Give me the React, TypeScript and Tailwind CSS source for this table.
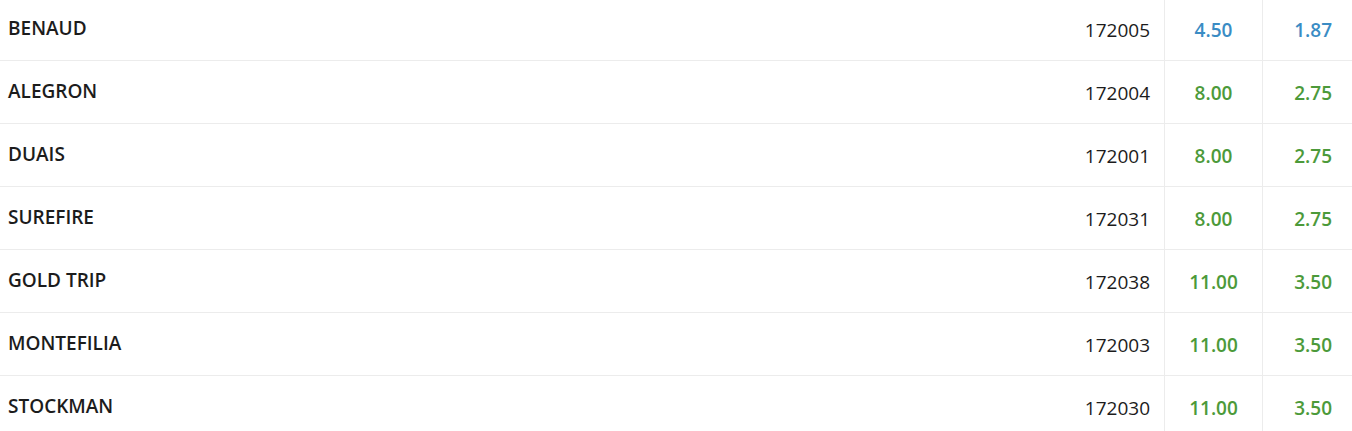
const runners = [
  { name: "BENAUD", id: "172005", win: "4.50", place: "1.87", fav: true },
  { name: "ALEGRON", id: "172004", win: "8.00", place: "2.75" },
  { name: "DUAIS", id: "172001", win: "8.00", place: "2.75" },
  { name: "SUREFIRE", id: "172031", win: "8.00", place: "2.75" },
  { name: "GOLD TRIP", id: "172038", win: "11.00", place: "3.50" },
  { name: "MONTEFILIA", id: "172003", win: "11.00", place: "3.50" },
  { name: "STOCKMAN", id: "172030", win: "11.00", place: "3.50" },
];

export default function App() {
  return (
    <div className="h-[431px] w-[1352px] overflow-hidden bg-white font-['Open_Sans',sans-serif] text-[19px] text-[#1c1c1c]">
      <div className="-mt-[2px] flex flex-col">
        {runners.map((r) => {
          const odds = r.fav ? "text-[#3a8cc4]" : "text-[#4c9a3a]";
          return (
            <div key={r.id} className="flex h-[63px] border-b border-[#ececec]">
              <div className="flex flex-1 items-center pl-2 pb-[2px] font-semibold">{r.name}</div>
              <div className="flex items-center pr-[14px] pt-[2px] text-right">{r.id}</div>
              <div className={`flex w-[98px] items-center justify-center border-l border-[#ececec] pt-[2px] font-semibold ${odds}`}>
                {r.win}
              </div>
              <div className={`flex w-[90px] items-center justify-end border-l border-[#ececec] pr-5 pt-[2px] font-semibold ${odds}`}>
                {r.place}
              </div>
            </div>
          );
        })}
      </div>
    </div>
  );
}
